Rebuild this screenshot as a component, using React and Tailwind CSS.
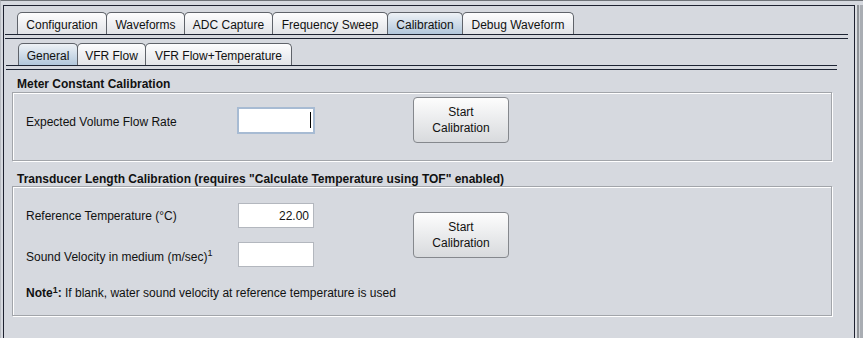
import React from 'react';

const mainTabs = [
    { label: 'Configuration', w: 'w-[90px]' },
    { label: 'Waveforms', w: 'w-[79px]' },
    { label: 'ADC Capture', w: 'w-[89px]' },
    { label: 'Frequency Sweep', w: 'w-[116px]' },
    { label: 'Calibration', w: 'w-[76px]', selected: true },
    { label: 'Debug Waveform', w: 'w-[112px]' },
];

const subTabs = [
    { label: 'General', w: 'w-[60px]', selected: true },
    { label: 'VFR Flow', w: 'w-[69px]' },
    { label: 'VFR Flow+Temperature', w: 'w-[147px]' },
];

function Tab({ label, w, selected, last }) {
    return (
        <div className={`${w} h-[22px] shrink-0 flex items-center justify-center pt-[2px] border border-b-0 border-[#5f636a] rounded-t-[5px] ${last ? '' : '-mr-px'} ${selected ? 'bg-linear-to-b from-[#eef2f6] to-[#b2c7db]' : 'bg-linear-to-b from-[#fdfdfe] to-[#e2e4e8]'}`}>
            {label}
        </div>
    );
}

function StartButton() {
    return (
        <button className="w-[96px] h-[46px] shrink-0 rounded-[4px] border border-[#85888d] bg-linear-to-b from-[#fdfdfd] to-[#d8dadd] text-center leading-[16px] text-[#111]">
            Start<br />Calibration
        </button>
    );
}

// java etched border: gray line with a white line beside it
const etched = 'border border-[#a2a5aa] shadow-[inset_1px_1px_0_#ffffff,1px_1px_0_#ffffff]';

export default function App() {
    return (
        <div className="w-[863px] h-[338px] overflow-hidden bg-[#d6d9df] border-t border-l border-t-[#6f7378] border-l-[#b9bcc2] pt-[4px] pl-[2px] flex text-[12px] text-[#111] font-['Liberation_Sans',Arial,sans-serif]">
            <div className="w-[852px] shrink-0 border-t border-l border-r border-[#1e2230]">
                {/* main tabs */}
                <div className="flex pl-[13px] pt-[6px]">
                    {mainTabs.map((t, i) => (
                        <Tab key={t.label} {...t} last={i === mainTabs.length - 1} />
                    ))}
                </div>
                <div className="ml-[1px] w-[843px] h-[5px] border-y border-[#1d2433]" />

                {/* sub tabs */}
                <div className="flex pl-[14px] pt-[4px]">
                    {subTabs.map((t, i) => (
                        <Tab key={t.label} {...t} last={i === subTabs.length - 1} />
                    ))}
                </div>
                <div className="ml-[2px] w-[831px] h-[5px] border-y border-[#1d2433]" />

                <div className="ml-[8px] w-[821px]">
                    <div className="h-[22px] pt-[7px] pl-[5px] leading-[14px] font-bold">Meter Constant Calibration</div>
                    <div className={`w-[820px] h-[69px] ${etched} pt-[4px] pl-[13px]`}>
                        <div className="flex items-center">
                            <div className="w-[211px] pt-[3px]">Expected Volume Flow Rate</div>
                            <div className="w-[78px] h-[27px] bg-white border-2 border-[#a7bbd3] flex items-center justify-end pr-[2px]">
                                <div className="w-px h-[16px] bg-black" />
                            </div>
                            <div className="ml-[98px]">
                                <StartButton />
                            </div>
                        </div>
                    </div>

                    <div className="h-[25px] pt-[11px] pl-[5px] leading-[14px] font-bold">
                        Transducer Length Calibration (requires "Calculate Temperature using TOF" enabled)
                    </div>
                    <div className={`w-[820px] h-[130px] ${etched} pt-[16px] pl-[13px]`}>
                        <div className="flex items-center">
                            <div className="flex flex-col gap-[14px]">
                                <div className="flex items-center">
                                    <div className="w-[212px] pt-[1px]">Reference Temperature (°C)</div>
                                    <div className="w-[76px] h-[25px] bg-white border border-[#b3b7be] flex items-center justify-end pr-[4px]">22.00</div>
                                </div>
                                <div className="flex items-center">
                                    <div className="w-[212px] pt-[4px]">Sound Velocity in medium (m/sec)<sup className="text-[9px]">1</sup></div>
                                    <div className="w-[76px] h-[25px] bg-white border border-[#b3b7be]" />
                                </div>
                            </div>
                            <div className="ml-[99px]">
                                <StartButton />
                            </div>
                        </div>
                        <div className="mt-[19px] leading-[14px]">
                            <span className="font-bold">Note<sup className="text-[9px]">1</sup>:</span> If blank, water sound velocity at reference temperature is used
                        </div>
                    </div>
                </div>
            </div>

            {/* right edge */}
            <div className="w-[8px] h-full flex">
                <div className="w-[2px] bg-[#dcdee2]" />
                <div className="w-[2px] bg-[#8f9398]" />
                <div className="w-[1px] bg-[#d0d3d8]" />
                <div className="w-[3px] bg-[#a9adb3]" />
            </div>
        </div>
    );
}
